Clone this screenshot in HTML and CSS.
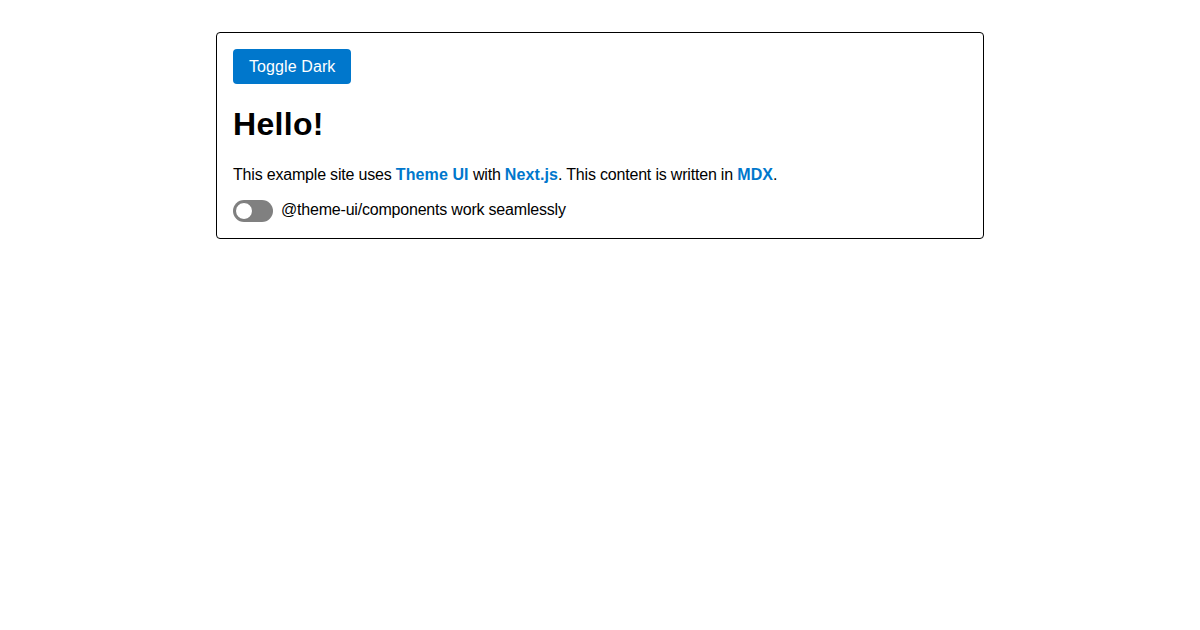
FILE: index.html
```html
<!DOCTYPE html>
<html>
<head>
<meta charset="utf-8">
<link rel="stylesheet" href="styles.css">
</head>
<body>
<div class="card">
  <button class="btn">Toggle Dark</button>
  <h1 class="title">Hello!</h1>
  <p class="text">This example site uses <a href="#">Theme UI</a> with <a href="#">Next.js</a>. This content is written in <a href="#">MDX</a>.</p>
  <label class="switch-row">
    <span class="switch"><span class="knob"></span></span>
    <span class="switch-label">@theme-ui/components work seamlessly</span>
  </label>
</div>
</body>
</html>
```

FILE: styles.css
```css
html, body {
  margin: 0;
  padding: 0;
  background: #fff;
}
body {
  font-family: "Liberation Sans", Arial, sans-serif;
  color: #000;
  font-size: 16px;
}
.card {
  width: 768px;
  box-sizing: border-box;
  margin: 32px auto 0;
  border: 1px solid #000;
  border-radius: 4px;
  padding: 16px;
  display: flex;
  flex-direction: column;
  align-items: flex-start;
}
.btn {
  font-family: "Liberation Sans", Arial, sans-serif;
  font-size: 16px;
  line-height: 19px;
  letter-spacing: 0.1px;
  background: #0077cc;
  color: #fff;
  border: 0;
  border-radius: 4px;
  padding: 8px 16px;
  height: 35px;
  margin: 0;
}
.title {
  font-size: 32px;
  line-height: 40px;
  font-weight: 700;
  letter-spacing: 0.3px;
  margin: 20px 0 19px;
}
.text {
  margin: 0;
  line-height: 24px;
  letter-spacing: -0.19px;
}
.text a {
  color: #0077cc;
  font-weight: 700;
  letter-spacing: 0.1px;
  text-decoration: none;
}
.switch-row {
  display: flex;
  align-items: center;
  gap: 8px;
  margin-top: 13px;
  height: 22px;
}
.switch {
  width: 40px;
  height: 22px;
  border-radius: 11px;
  background: #808080;
  display: flex;
  align-items: center;
  padding: 2px;
  box-sizing: border-box;
}
.knob {
  width: 18px;
  height: 18px;
  border-radius: 50%;
  background: #fff;
  box-sizing: border-box;
  border: 1px solid #777;
}
.switch-label {
  line-height: 20px;
  padding-bottom: 2px;
  letter-spacing: -0.2px;
}
```
